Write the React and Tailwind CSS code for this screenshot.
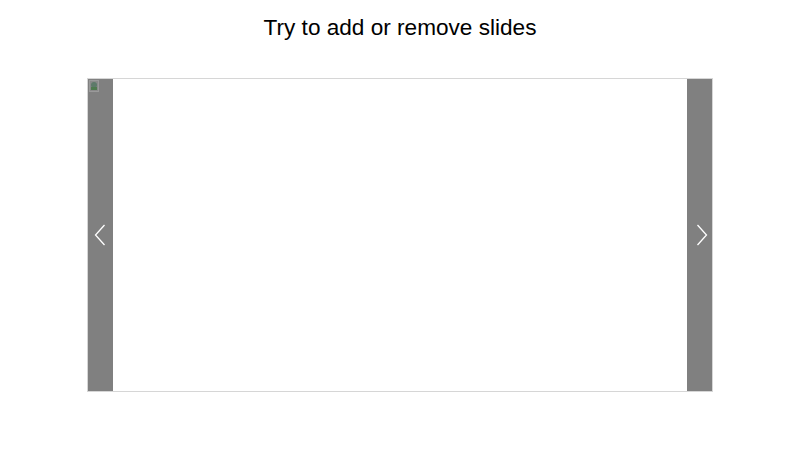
import React from 'react';

const Chevron = ({ dir }) => (
  <svg width="12" height="22" viewBox="0 0 12 22" fill="none">
    <path
      d={dir === 'left' ? 'M10.5 1 L1.5 11 L10.5 21' : 'M1.5 1 L10.5 11 L1.5 21'}
      stroke="#ffffff"
      strokeWidth="1.3"
    />
  </svg>
);

const App = () => {
  return (
    <div className="min-h-screen bg-white font-['Liberation_Sans',Arial,sans-serif]">
      <h1 className="text-center text-[22.6px] leading-[28px] text-black pt-[14px]">
        Try to add or remove slides
      </h1>

      {/* Carousel */}
      <div className="mx-auto mt-[36px] w-[626px] h-[314px] border border-[#d6d6d6] flex relative">
        <button className="w-[25px] h-full bg-[#808080] flex items-center justify-center pr-[1px]">
          <Chevron dir="left" />
        </button>
        <div className="flex-1 bg-white"></div>
        <button className="w-[25px] h-full bg-[#808080] flex items-center justify-center pl-[4px]">
          <Chevron dir="right" />
        </button>

        {/* broken image placeholder */}
        <div className="absolute left-[1px] top-[1px] w-[10px] h-[12px]">
          <svg width="10" height="12" viewBox="0 0 10 12">
            <rect x="0.5" y="0.5" width="9" height="11" fill="#8a8a8a" stroke="#9a9a9a" />
            <circle cx="5" cy="5" r="3" fill="#5e7a6a" />
            <rect x="2" y="7" width="6" height="3" fill="#4f7a4f" />
          </svg>
        </div>
      </div>
    </div>
  );
};

export default App;
